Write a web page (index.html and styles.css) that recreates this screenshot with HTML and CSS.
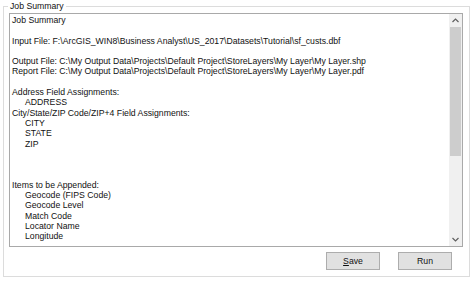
FILE: index.html
```html
<!DOCTYPE html>
<html>
<head>
<meta charset="utf-8">
<link rel="stylesheet" href="styles.css">
</head>
<body>
<div class="group">
  <div class="legend">Job Summary</div>
  <div class="textbox">
    <div class="text">
      <div>Job Summary</div>
      <div>&nbsp;</div>
      <div>Input File: F:\ArcGIS_WIN8\Business Analyst\US_2017\Datasets\Tutorial\sf_custs.dbf</div>
      <div>&nbsp;</div>
      <div>Output File: C:\My Output Data\Projects\Default Project\StoreLayers\My Layer\My Layer.shp</div>
      <div>Report File: C:\My Output Data\Projects\Default Project\StoreLayers\My Layer\My Layer.pdf</div>
      <div>&nbsp;</div>
      <div>Address Field Assignments:</div>
      <div class="ind">ADDRESS</div>
      <div>City/State/ZIP Code/ZIP+4 Field Assignments:</div>
      <div class="ind">CITY</div>
      <div class="ind">STATE</div>
      <div class="ind">ZIP</div>
      <div>&nbsp;</div>
      <div>&nbsp;</div>
      <div>&nbsp;</div>
      <div>Items to be Appended:</div>
      <div class="ind">Geocode (FIPS Code)</div>
      <div class="ind">Geocode Level</div>
      <div class="ind">Match Code</div>
      <div class="ind">Locator Name</div>
      <div class="ind">Longitude</div>
    </div>
    <div class="scrollbar">
      <div class="arrow">
        <svg width="7" height="5" viewBox="0 0 7 5"><path d="M0.5 4 L3.5 1 L6.5 4" fill="none" stroke="#606060" stroke-width="1.2"/></svg>
      </div>
      <div class="track"><div class="thumb"></div></div>
      <div class="arrow">
        <svg width="7" height="5" viewBox="0 0 7 5"><path d="M0.5 1 L3.5 4 L6.5 1" fill="none" stroke="#606060" stroke-width="1.2"/></svg>
      </div>
    </div>
  </div>
  <div class="buttons">
    <div class="btn"><span class="u">S</span>ave</div>
    <div class="btn">Run</div>
  </div>
</div>
</body>
</html>
```
FILE: styles.css
```css
html, body {
  margin: 0;
  padding: 0;
  background: #ffffff;
}
body {
  width: 474px;
  height: 283px;
  overflow: hidden;
  font-family: "Liberation Sans", Arial, sans-serif;
  font-size: 8.7px;
  color: #111111;
  padding: 6px 4px 0 3px;
  box-sizing: border-box;
}
.group {
  position: relative;
  border: 1px solid #dcdcdc;
  height: 271px;
  box-sizing: border-box;
  padding: 6px 6px 0 5px;
  display: flex;
  flex-direction: column;
}
.legend {
  position: absolute;
  left: 4px;
  top: -7px;
  background: #fff;
  padding: 0 2px;
  line-height: 12px;
}
.textbox {
  height: 234px;
  border: 1px solid #a9a9a9;
  box-sizing: border-box;
  display: flex;
  overflow: hidden;
}
.text {
  flex: 1;
  padding: 1px 0 0 2px;
  line-height: 10.3px;
  white-space: nowrap;
  overflow: hidden;
}
.ind {
  padding-left: 13px;
}
.scrollbar {
  width: 13px;
  background: #f0f0f0;
  display: flex;
  flex-direction: column;
}
.arrow {
  height: 13px;
  display: flex;
  align-items: center;
  justify-content: center;
}
.track {
  flex: 1;
  padding: 0 1px;
}
.thumb {
  height: 129px;
  background: #cdcdcd;
}
.buttons {
  display: flex;
  justify-content: flex-end;
  gap: 18px;
  padding: 5px 11px 0 0;
}
.btn {
  width: 54px;
  height: 18px;
  box-sizing: border-box;
  border: 1px solid #adadad;
  background: #e1e1e1;
  display: flex;
  align-items: center;
  justify-content: center;
}
.u {
  text-decoration: underline;
}
```
